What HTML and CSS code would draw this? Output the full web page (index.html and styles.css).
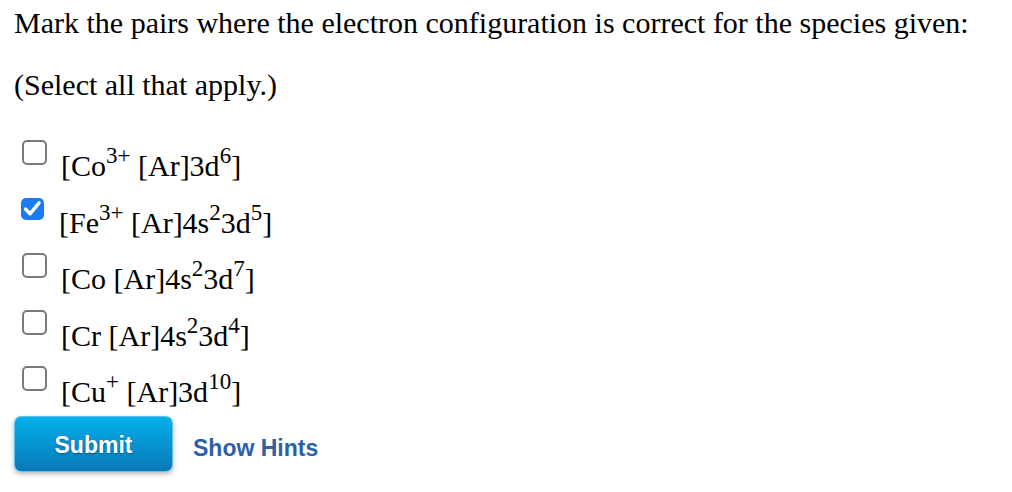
FILE: index.html
```html
<html lang="en">

<head>
  <meta charset="UTF-8">
  <meta name="viewport" content="width=device-width, initial-scale=1.0">
  <title>Question</title>
  <link rel="stylesheet" href="styles.css">
</head>

<body>
  <div class="question">
    <p class="prompt">Mark the pairs where the electron configuration is correct for the species given:</p>
    <p class="prompt hint">(Select all that apply.)</p>
    <div class="choices">
      <div class="choice">
        <span class="box"></span>
        <span class="label">[Co<sup>3+</sup> [Ar]3d<sup>6</sup>]</span>
      </div>
      <div class="choice">
        <span class="box checked">
          <svg width="23" height="22" viewBox="0 0 23 22"><path d="M4.5 11 L9 15.8 L18 4.8" fill="none" stroke="#FFF" stroke-width="3.4" stroke-linecap="round" stroke-linejoin="round"/></svg>
        </span>
        <span class="label">[Fe<sup>3+</sup> [Ar]4s<sup>2</sup>3d<sup>5</sup>]</span>
      </div>
      <div class="choice">
        <span class="box"></span>
        <span class="label">[Co [Ar]4s<sup>2</sup>3d<sup>7</sup>]</span>
      </div>
      <div class="choice">
        <span class="box"></span>
        <span class="label">[Cr [Ar]4s<sup>2</sup>3d<sup>4</sup>]</span>
      </div>
      <div class="choice">
        <span class="box"></span>
        <span class="label">[Cu<sup>+</sup> [Ar]3d<sup>10</sup>]</span>
      </div>
    </div>
    <div class="actions">
      <button type="button" class="submit">Submit</button>
      <span class="hints">Show Hints</span>
    </div>
  </div>
</body>

</html>
```

FILE: styles.css
```css
* {
  box-sizing: border-box;
  margin: 0;
  padding: 0;
}

body {
  background: #FFF;
  font-family: "Liberation Serif", "Times New Roman", serif;
  color: #000;
}

.question {
  padding: 6px 0 0 14px;
}

.prompt {
  font-size: 30px;
  line-height: 34px;
}

.prompt.hint {
  margin-top: 28px;
}

.choices {
  display: flex;
  flex-direction: column;
  gap: 16.5px;
  margin-top: 38px;
}

.choice {
  display: flex;
  align-items: flex-start;
  height: 40px;
}

.box {
  flex: none;
  width: 25px;
  height: 25px;
  margin-left: 8px;
  border: 2px solid #7a7a7a;
  border-radius: 5px;
  background: #FFF;
}

.box.checked {
  width: 23px;
  height: 22px;
  margin: 1px 1px 0 7px;
  border: none;
  background: #1b7bf4;
}

.box svg {
  display: block;
}

.label {
  margin: 9px 0 0 14px;
  font-size: 30px;
  line-height: 34px;
  white-space: nowrap;
}

.label sup {
  font-size: 23px;
  line-height: 0;
  vertical-align: 13px;
}

.actions {
  display: flex;
  align-items: center;
  gap: 20px;
  margin-top: 10px;
}

.submit {
  all: unset;
  display: flex;
  align-items: center;
  justify-content: center;
  width: 157px;
  height: 52px;
  padding-top: 2px;
  border: 1.5px solid #62c3f0;
  border-radius: 7px;
  background: linear-gradient(#04b0ec, #0a78b7);
  box-shadow: 0 2px 5px rgba(0, 0, 0, .3);
  color: #FFF;
  font: bold 23px "Liberation Sans", Arial, sans-serif;
  text-shadow: 0 1px 2px rgba(0, 0, 0, .35);
  cursor: pointer;
}

.hints {
  margin-top: 8px;
  color: #2d60a7;
  font: bold 23px "Liberation Sans", Arial, sans-serif;
  cursor: pointer;
}
```
